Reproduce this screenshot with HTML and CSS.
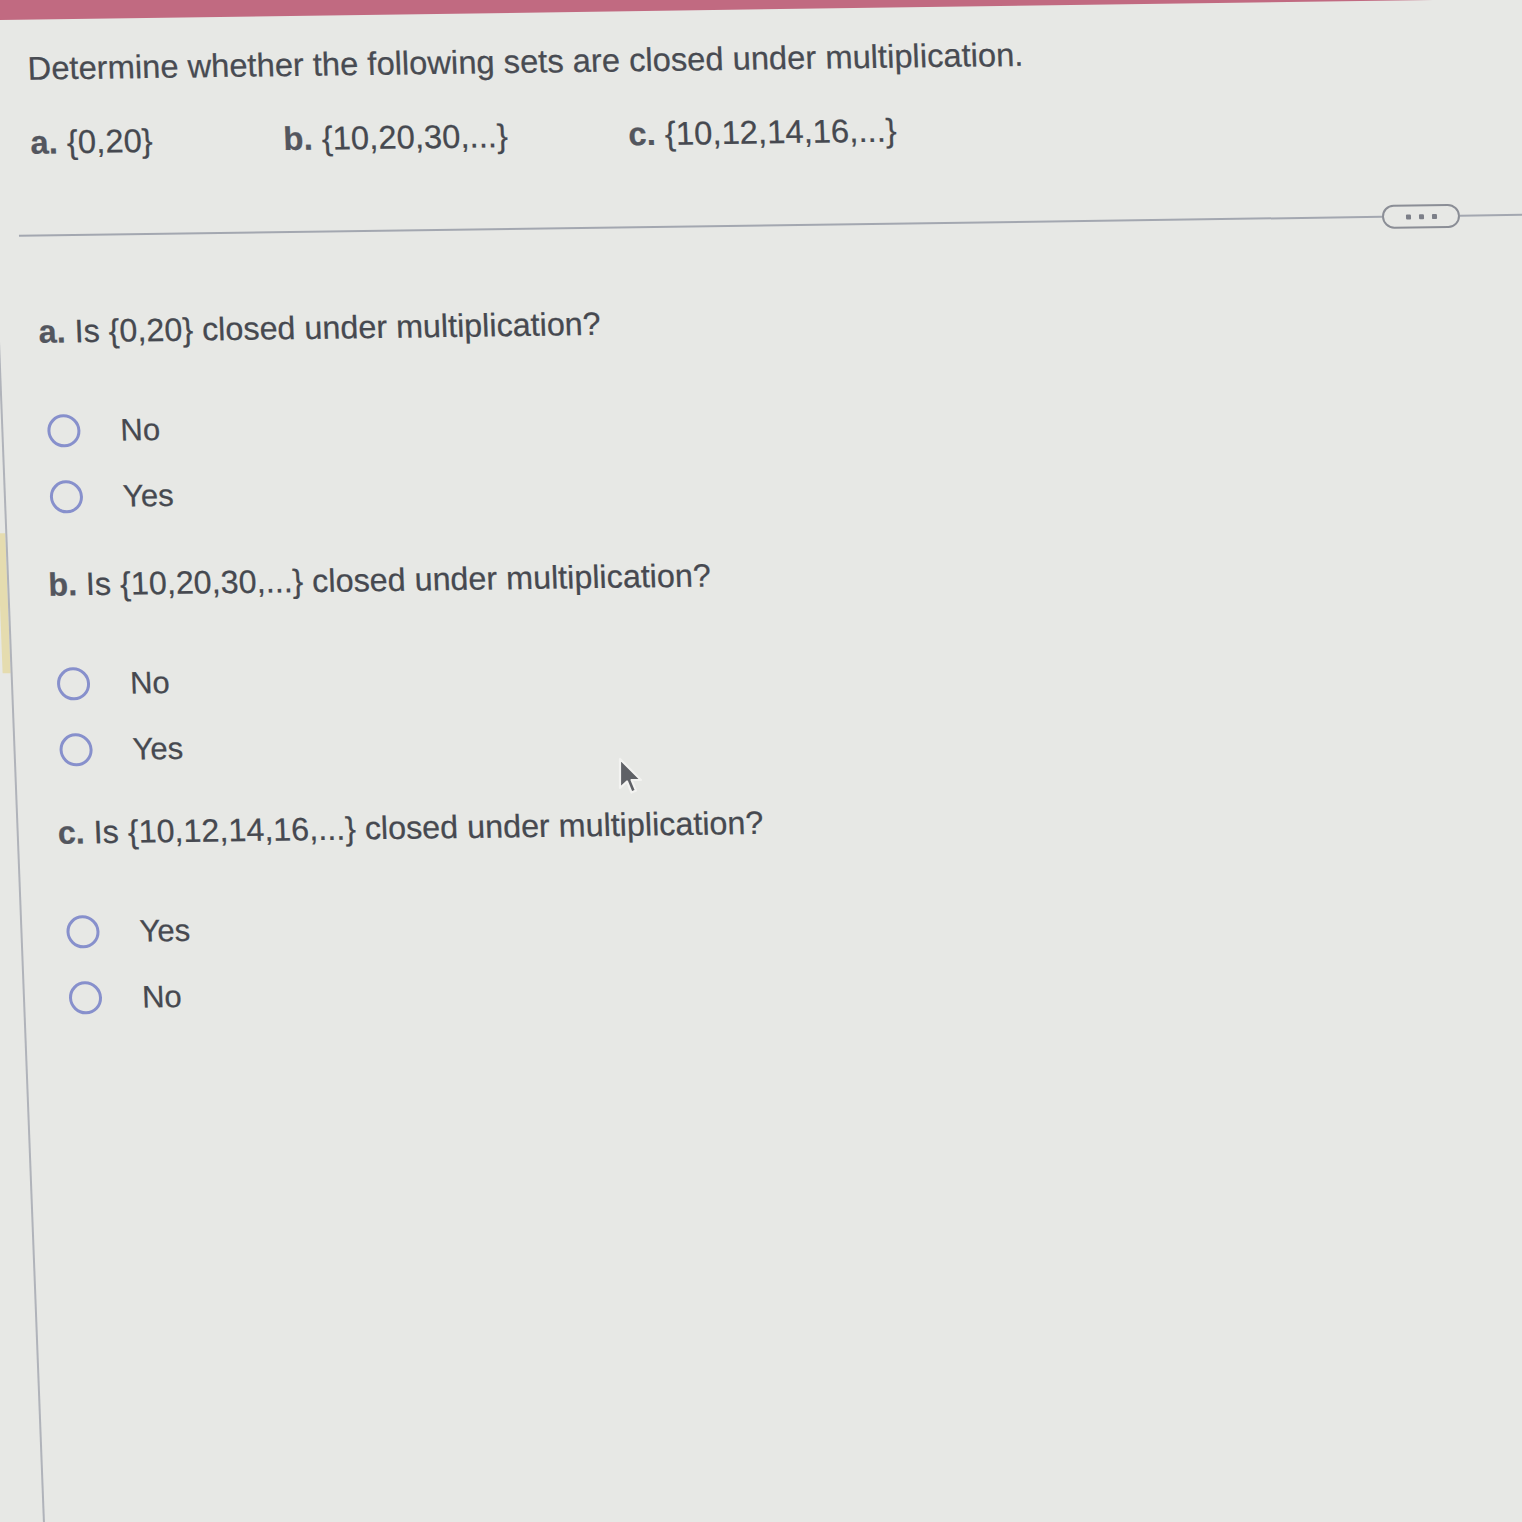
FILE: index.html
```html
<!DOCTYPE html>
<html lang="en">
<head>
<meta charset="utf-8">
<title>Closed under multiplication</title>
<link rel="stylesheet" href="styles.css">
</head>
<body>
<div class="page">
  <div class="topbar"></div>
  <div class="heading">Determine whether the following sets are closed under multiplication.</div>
  <div class="sets">
    <div class="set"><span class="lbl">a.</span> {0,20}</div>
    <div class="set"><span class="lbl">b.</span> {10,20,30,...}</div>
    <div class="set"><span class="lbl">c.</span> {10,12,14,16,...}</div>
  </div>
  <div class="rule">
    <div class="rule-line first"></div>
    <div class="pill"><span class="dot"></span><span class="dot"></span><span class="dot"></span></div>
    <div class="rule-line rest"></div>
  </div>
  <div class="lower">
    <div class="gutter"><div class="flag"></div></div>
    <div class="content">
      <div class="group">
        <div class="question"><span class="lbl">a.</span> Is {0,20} closed under multiplication?</div>
        <div class="options">
          <div class="option"><span class="radio"></span><span class="opt-text">No</span></div>
          <div class="option"><span class="radio"></span><span class="opt-text">Yes</span></div>
        </div>
      </div>
      <div class="group">
        <div class="question"><span class="lbl">b.</span> Is {10,20,30,...} closed under multiplication?</div>
        <div class="options">
          <div class="option"><span class="radio"></span><span class="opt-text">No</span></div>
          <div class="option"><span class="radio"></span><span class="opt-text">Yes</span></div>
        </div>
      </div>
      <div class="group">
        <div class="question"><span class="lbl">c.</span> Is {10,12,14,16,...} closed under multiplication?</div>
        <div class="options">
          <div class="option"><span class="radio"></span><span class="opt-text">Yes</span></div>
          <div class="option"><span class="radio"></span><span class="opt-text">No</span></div>
        </div>
      </div>
    </div>
  </div>
</div>
<svg class="cursor" width="30" height="42" viewBox="0 0 30 42" aria-hidden="true">
  <path d="M3 3 L3 32 L10 25.5 L14.5 36.5 L19 34.6 L14.6 24 L24 24 Z" fill="#5f6166" stroke="#f3f3f1" stroke-width="2.2" stroke-linejoin="round"/>
</svg>
</body>
</html>
```
FILE: styles.css
```css
html, body {
  margin: 0;
  padding: 0;
}
body {
  background: #e7e8e5;
  height: 1522px;
  overflow: hidden;
  position: relative;
  font-family: "Liberation Sans", Arial, sans-serif;
  color: #464950;
  -webkit-text-stroke: 0.25px currentColor;
}
.page {
  width: 1600px;
  margin-left: -40px;
  transform-origin: 40px 0;
  transform: skew(2.18deg, -0.8deg);
}
.topbar {
  height: 20px;
  background: #c16a81;
}
.heading {
  margin: 29px 0 0 65px;
  font-size: 32.7px;
  line-height: 40px;
  color: #484b52;
}
.sets {
  display: grid;
  grid-template-columns: 253px 345px auto;
  margin: 34px 0 0 65px;
  font-size: 32.8px;
  line-height: 40px;
}
.lbl {
  font-weight: bold;
  color: #53565e;
}
.rule {
  display: flex;
  align-items: center;
  height: 24px;
  margin: 61px 0 0 50px;
}
.rule-line {
  height: 2px;
  background: #a3a7b0;
}
.rule-line.first {
  width: 1363px;
}
.rule-line.rest {
  flex: 1;
}
.pill {
  box-sizing: border-box;
  width: 78px;
  height: 24px;
  border: 2.5px solid #8b8e96;
  border-radius: 13px;
  display: flex;
  align-items: center;
  justify-content: center;
  gap: 8px;
}
.dot {
  width: 5px;
  height: 5px;
  border-radius: 1px;
  background: #7c7f88;
}
.lower {
  display: flex;
  margin-left: 17px;
}
.gutter {
  width: 8px;
}
.flag {
  margin-top: 285px;
  height: 140px;
  background: #e5dcaf;
}
.content {
  flex: 1;
  border-left: 2px solid #b0b3ba;
  padding-left: 39px;
  padding-top: 63.5px;
  min-height: 1216px;
}
.group {
  margin-bottom: 42px;
}
.group:first-child {
  margin-bottom: 47px;
}
.question {
  font-size: 32.3px;
  line-height: 40px;
  margin-bottom: 60px;
}
.options {
  display: flex;
  flex-direction: column;
  gap: 26px;
}
.option {
  display: flex;
  align-items: center;
  height: 40px;
  margin-left: 5px;
}
.radio {
  box-sizing: border-box;
  width: 33px;
  height: 33px;
  border: 3.3px solid #8790cc;
  border-radius: 50%;
  margin-right: 40px;
}
.opt-text {
  font-size: 31px;
  line-height: 40px;
}
.cursor {
  position: absolute;
  left: 617px;
  top: 756px;
}
```
